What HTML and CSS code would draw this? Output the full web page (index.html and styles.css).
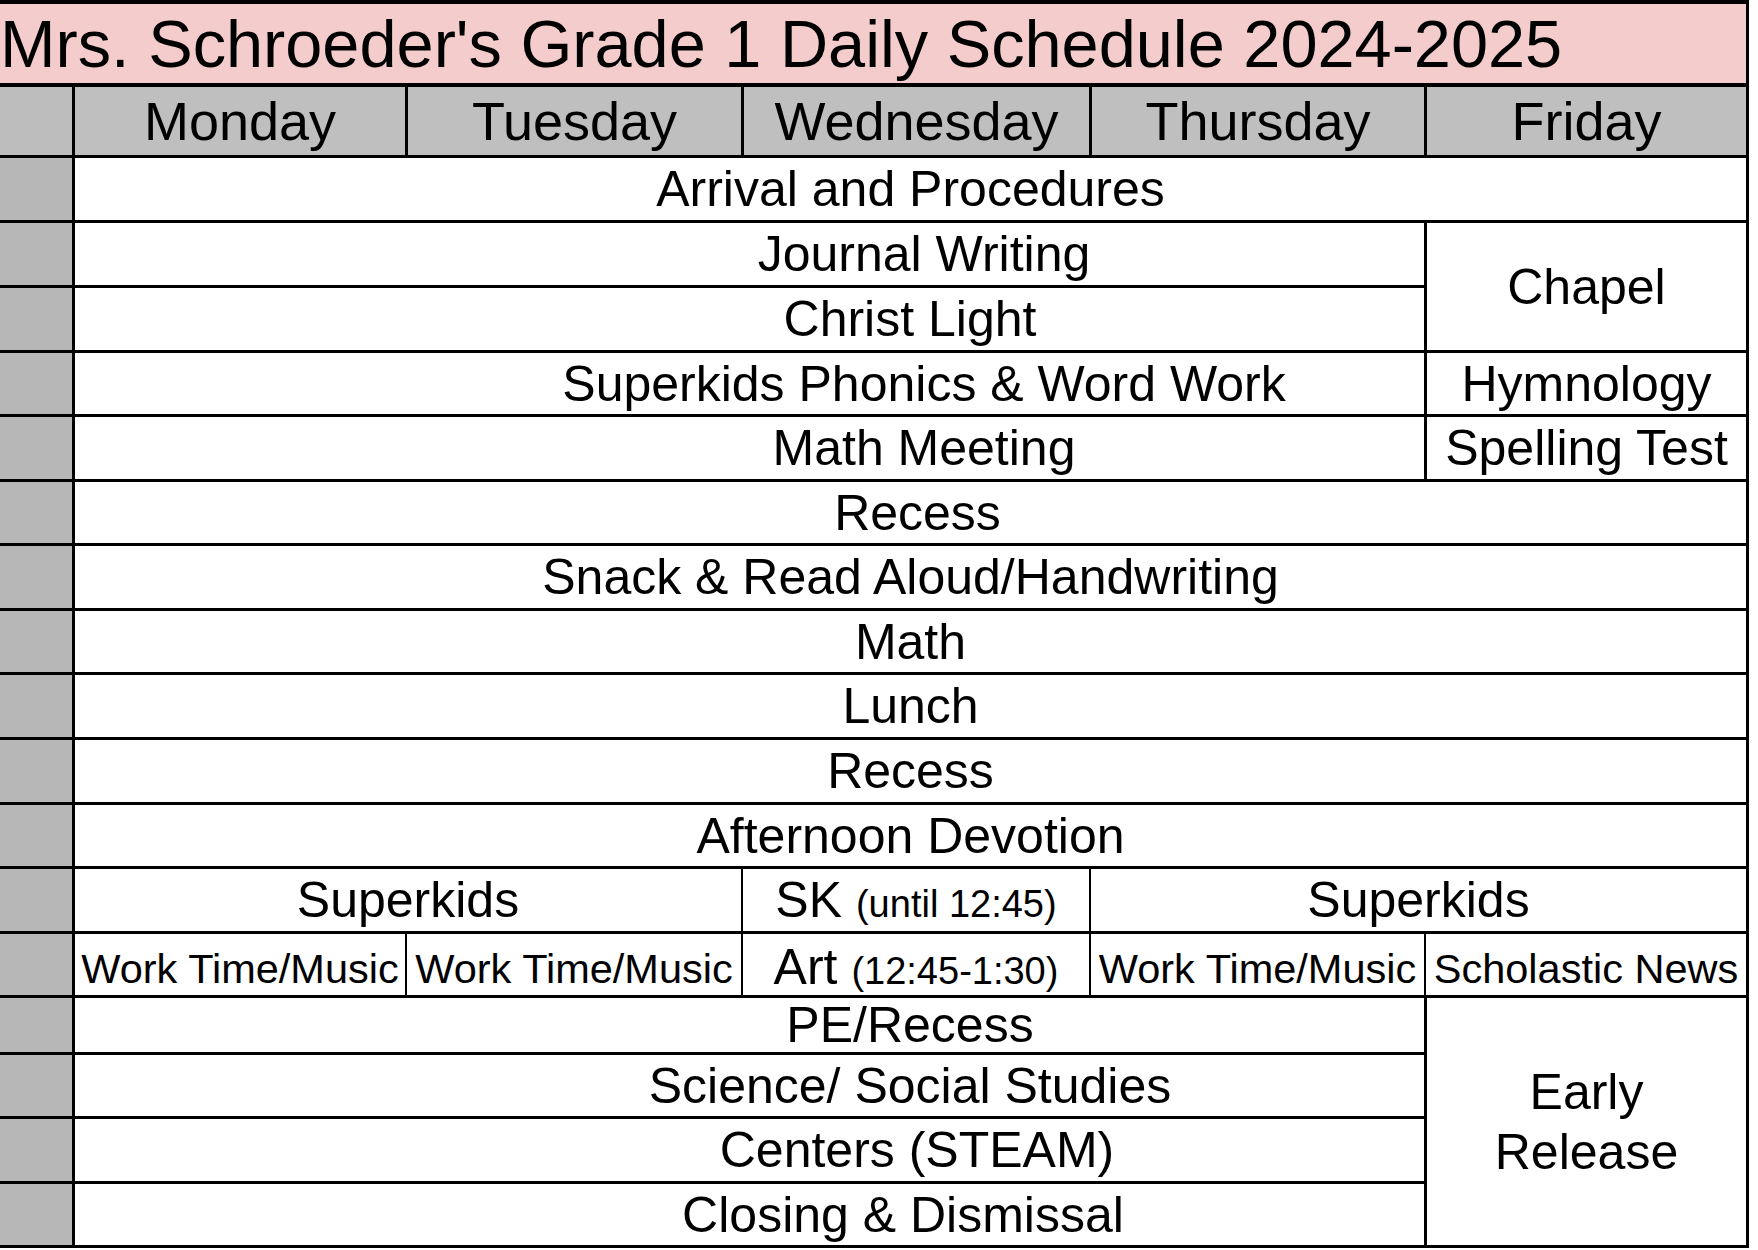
FILE: index.html
```html
<!DOCTYPE html>
<html lang="en">
<head>
<meta charset="utf-8">
<title>Mrs. Schroeder's Grade 1 Daily Schedule 2024-2025</title>
<link rel="stylesheet" href="styles.css">
</head>
<body>
<div class="sheet">
  <div class="cell title">Mrs. Schroeder's Grade 1 Daily Schedule 2024-2025</div>

  <div class="cell side corner"></div>
  <div class="cell day">Monday</div>
  <div class="cell day">Tuesday</div>
  <div class="cell day">Wednesday</div>
  <div class="cell day">Thursday</div>
  <div class="cell day">Friday</div>

  <div class="cell side"></div>
  <div class="cell span5">Arrival and Procedures</div>

  <div class="cell side"></div>
  <div class="cell span4 off-b">Journal Writing</div>
  <div class="cell tall2">Chapel</div>

  <div class="cell side"></div>
  <div class="cell span4 off-a">Christ Light</div>

  <div class="cell side"></div>
  <div class="cell span4 off-b">Superkids Phonics &amp; Word Work</div>
  <div class="cell">Hymnology</div>

  <div class="cell side"></div>
  <div class="cell span4 off-b">Math Meeting</div>
  <div class="cell">Spelling Test</div>

  <div class="cell side"></div>
  <div class="cell span5 nudge">Recess</div>

  <div class="cell side"></div>
  <div class="cell span5">Snack &amp; Read Aloud/Handwriting</div>

  <div class="cell side"></div>
  <div class="cell span5">Math</div>

  <div class="cell side"></div>
  <div class="cell span5">Lunch</div>

  <div class="cell side"></div>
  <div class="cell span5">Recess</div>

  <div class="cell side"></div>
  <div class="cell span5">Afternoon Devotion</div>

  <div class="cell side"></div>
  <div class="cell span2">Superkids</div>
  <div class="cell thin"><span>SK <span class="note">(until 12:45)</span></span></div>
  <div class="cell span2 thin">Superkids</div>

  <div class="cell side"></div>
  <div class="cell sm">Work Time/Music</div>
  <div class="cell sm thin">Work Time/Music</div>
  <div class="cell thin low"><span>Art <span class="note">(12:45-1:30)</span></span></div>
  <div class="cell sm thin">Work Time/Music</div>
  <div class="cell sm thin">Scholastic News</div>

  <div class="cell side"></div>
  <div class="cell span4 off-a">PE/Recess</div>
  <div class="cell tall4"><span class="stack">Early<br>Release</span></div>

  <div class="cell side"></div>
  <div class="cell span4 off-a">Science/ Social Studies</div>

  <div class="cell side"></div>
  <div class="cell span4 off-c">Centers (STEAM)</div>

  <div class="cell side"></div>
  <div class="cell span4 off-d">Closing &amp; Dismissal</div>
</div>
</body>
</html>
```
FILE: styles.css
```css
html, body {
  margin: 0;
  padding: 0;
  background: #ffffff;
}

body {
  font-family: "Liberation Sans", Arial, sans-serif;
  color: #000000;
}

.sheet {
  display: grid;
  width: 1746px;
  grid-template-columns: 72px 333px 336px 348px 335px 322px;
  grid-template-rows: 83px 71px 65px 65px 65px 64px 65px 64px 65px 64px 65px 65px 64px 65px 64px 57px 64px 65px 64px;
  border-top: 4px solid #000;
  border-right: 3px solid #000;
  background: #ffffff;
}

.cell {
  display: flex;
  align-items: center;
  justify-content: center;
  border-left: 3px solid #000;
  border-bottom: 3px solid #000;
  font-size: 50px;
  white-space: nowrap;
  min-width: 0;
  overflow: visible;
}

.title {
  grid-column: 1 / -1;
  justify-content: flex-start;
  border-left: none;
  border-bottom-width: 4px;
  background: #f4cccc;
  font-size: 66.7px;
  padding-left: 0;
}

.side {
  border-left: none;
  background: #b7b7b7;
}

.corner {
  background: #bdbdbd;
}

.day {
  background: #bfbfbf;
  font-size: 54px;
}

.span5 { grid-column: span 5; }
.span4 { grid-column: span 4; }
.span2 { grid-column: span 2; }
.tall2 { grid-row: span 2; }
.tall4 { grid-row: span 4; }

.off-a { padding-left: 321px; }
.off-b { padding-left: 349px; }
.off-c { padding-left: 335px; }
.off-d { padding-left: 307px; }
.nudge { padding-left: 14px; }

.thin { border-left-width: 2px; }

.sm {
  font-size: 41.5px;
  padding-top: 8px;
}

.low {
  padding-top: 4px;
}

.note {
  font-size: 38px;
}

.stack {
  display: block;
  text-align: center;
  line-height: 60px;
}
```
